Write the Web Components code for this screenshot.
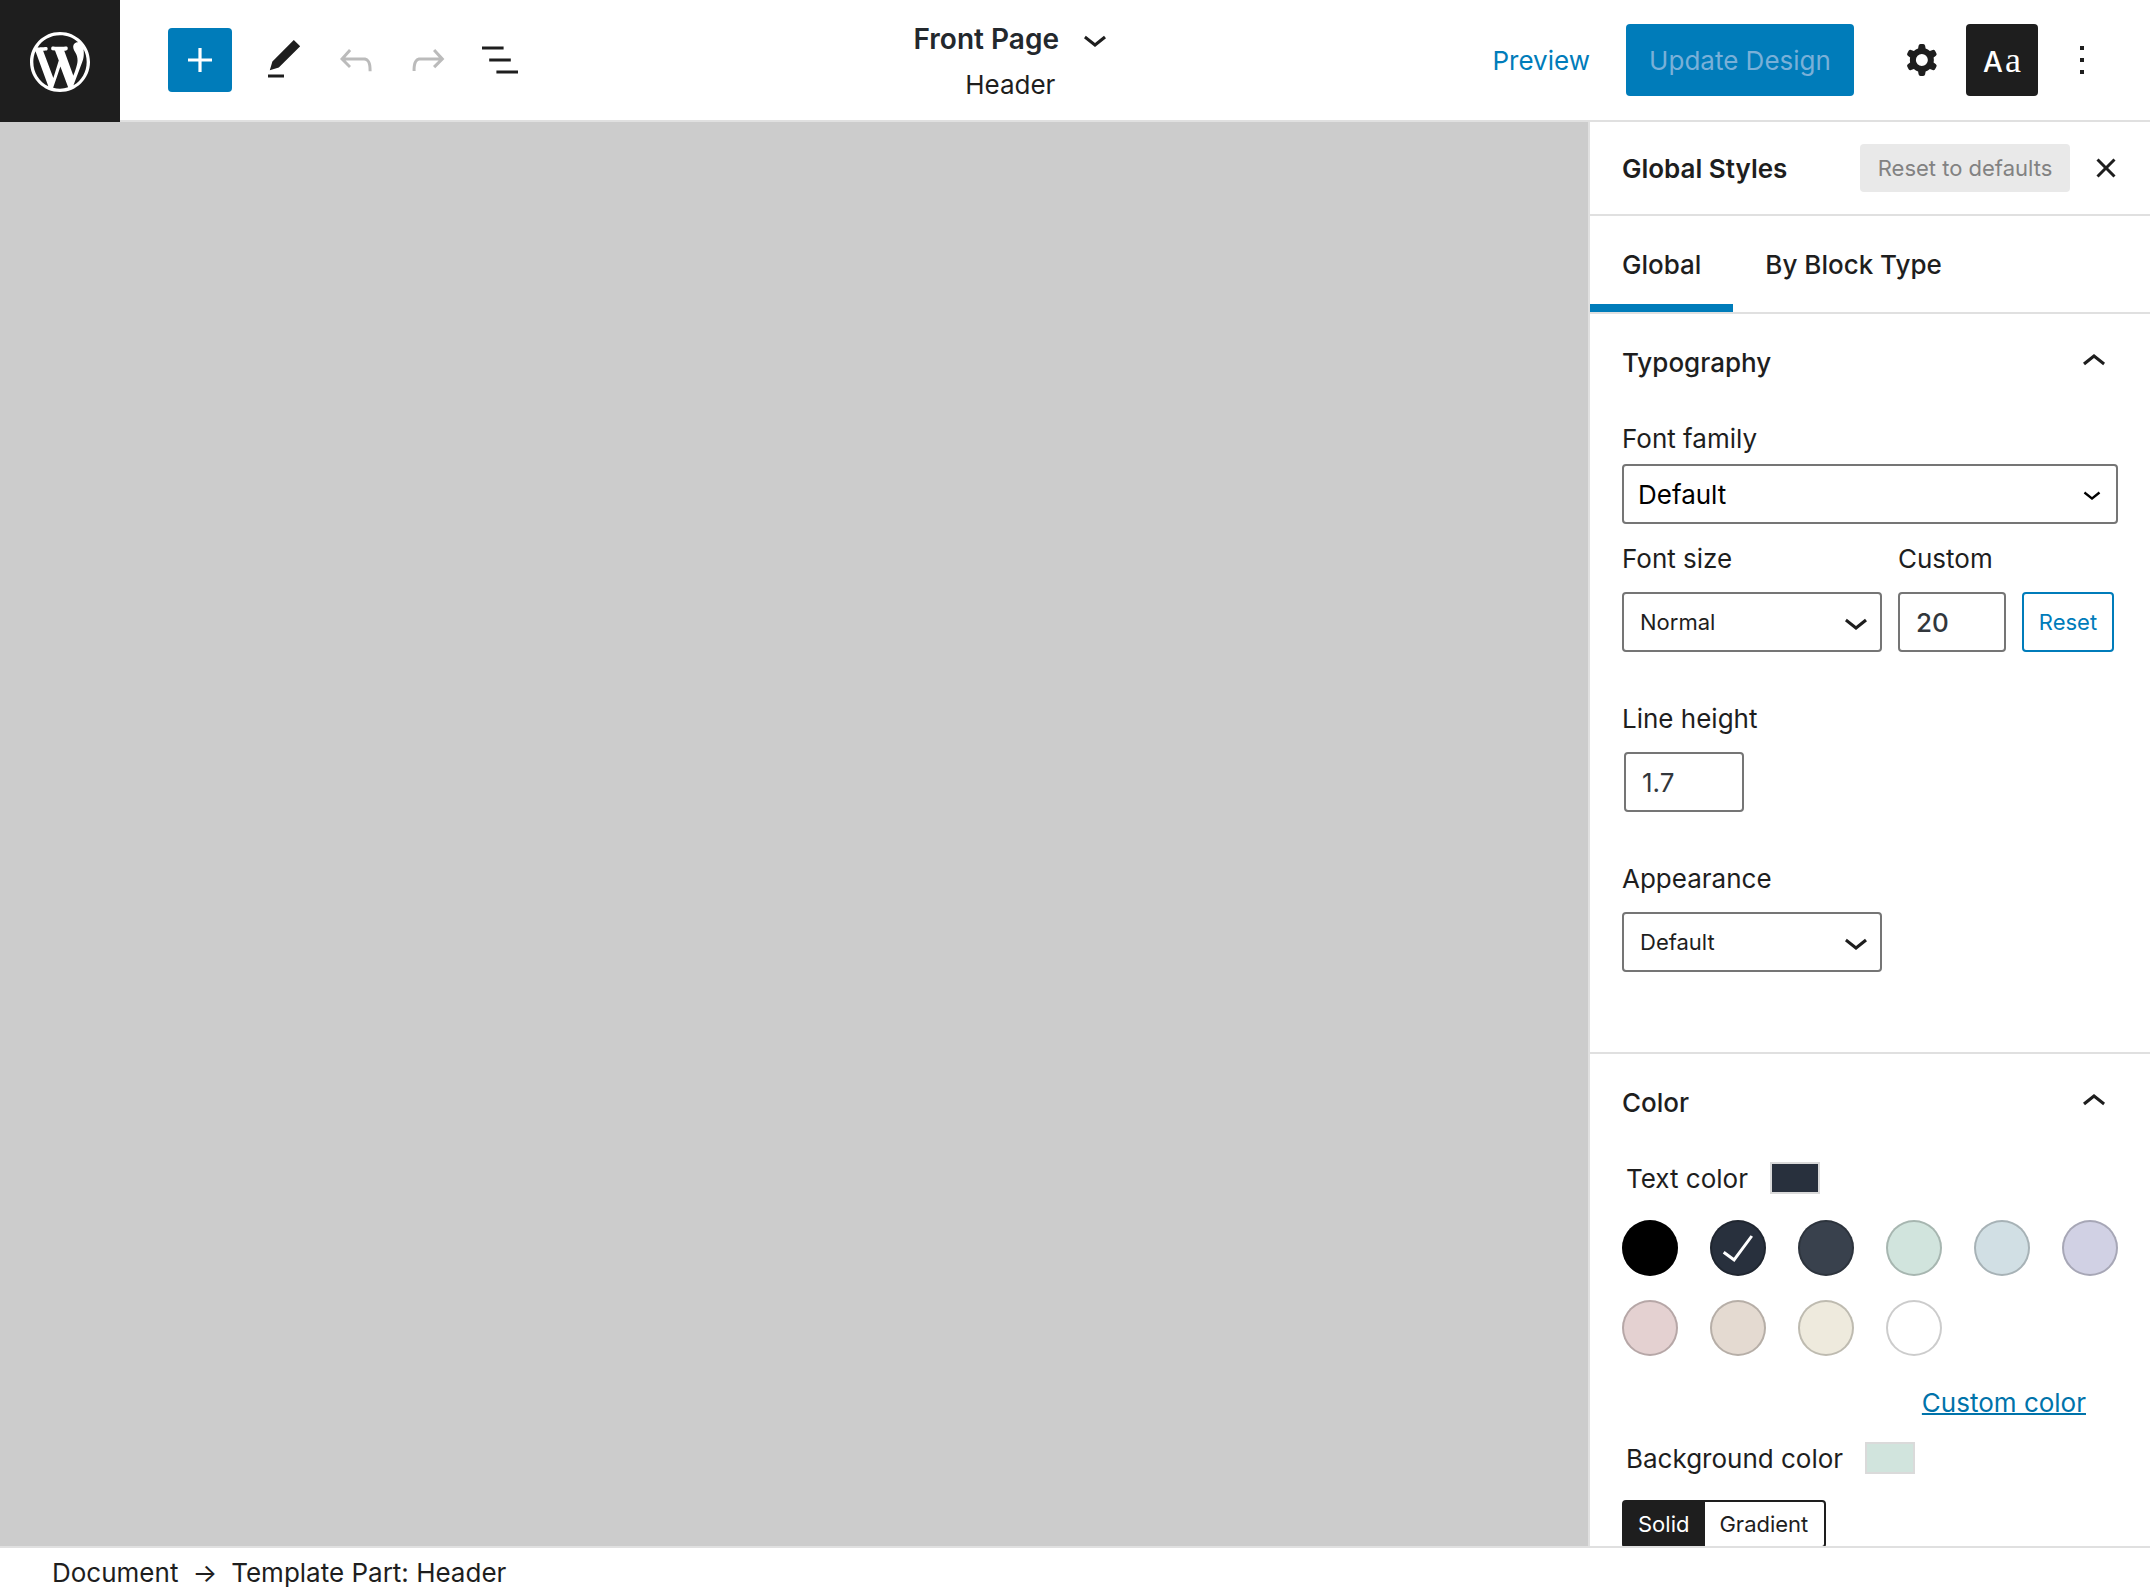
<!DOCTYPE html>
<html lang="en">
<head>
<meta charset="utf-8">
<title>Site Editor</title>
<style>
  html, body { margin: 0; height: 100%; }
  body { font-family: Inter, "Liberation Sans", sans-serif; font-size: 26px; line-height: 38px; color: #1e1e1e; background: #fff; }
</style>
</head>
<body>
<site-editor></site-editor>
<script>
const ICONS = {
  wordpress: ['-2 -2 24 24', 'M20 10c0-5.51-4.49-10-10-10C4.48 0 0 4.49 0 10c0 5.52 4.48 10 10 10 5.51 0 10-4.48 10-10zM7.78 15.37L4.37 6.22c.55-.02 1.17-.08 1.17-.08.5-.06.44-1.13-.06-1.11 0 0-1.45.11-2.37.11-.18 0-.37 0-.58-.01C4.12 2.69 6.87 1.11 10 1.11c2.33 0 4.45.87 6.05 2.34-.68-.11-1.65.39-1.65 1.58 0 .74.45 1.36.9 2.1.35.61.55 1.36.55 2.46 0 1.49-1.4 5-1.4 5l-3.03-8.37c.54-.02.82-.17.82-.17.5-.05.44-1.25-.06-1.22 0 0-1.44.12-2.38.12-.87 0-2.33-.12-2.33-.12-.5-.03-.56 1.2-.06 1.22l.92.08 1.26 3.41zM17.41 10c.24-.64.74-1.87.43-4.25.7 1.29 1.05 2.71 1.05 4.25 0 3.29-1.73 6.24-4.4 7.78.97-2.59 1.94-5.2 2.92-7.78zM6.1 18.09C3.12 16.65 1.11 13.53 1.11 10c0-1.3.23-2.48.72-3.59C3.25 10.3 4.67 14.2 6.1 18.09zm4.03-6.63l2.58 6.98c-.86.29-1.76.45-2.71.45-.79 0-1.57-.11-2.29-.33.81-2.38 1.62-4.74 2.42-7.1z'],
  plus: ['0 0 24 24', 'M18 11.2h-5.2V6h-1.6v5.2H6v1.6h5.2V18h1.6v-5.2H18z'],
  edit: ['0 0 24 24', 'M20.1 5.1L16.9 2 6.2 12.7l-1.3 4.4 4.5-1.3L20.1 5.1zM4 20.8h8v-1.5H4v1.5z'],
  undo: ['0 0 24 24', 'M18.3 11.7c-.6-.6-1.4-.9-2.3-.9H6.7l2.9-3.3-1.1-1-4.5 5L8.5 16l1-1-2.7-2.7H16c.5 0 .9.2 1.3.5 1 1 1 3.4 1 4.5v.3h1.5v-.2c0-1.5 0-4.3-1.5-5.7z'],
  redo: ['0 0 24 24', 'M15.6 6.5l-1.1 1 2.9 3.3H8c-.9 0-1.7.3-2.3.9-1.4 1.5-1.4 4.2-1.4 5.6v.2h1.5v-.3c0-1.1 0-3.5 1-4.5.3-.3.7-.5 1.3-.5h9.2L14.5 15l1.1 1.1 4.6-4.6-4.6-5z'],
  list: ['0 0 24 24', 'M13.8 5.2H3v1.5h10.8V5.2zm-3.6 12v1.5H21v-1.5H10.2zm7.2-6H6.6v1.5h10.8v-1.5z'],
  down: ['0 0 24 24', 'M17.5 11.6L12 16l-5.5-4.4.9-1.2L12 14l4.5-3.6 1 1.2z'],
  downTight: ['6 6 12 12', 'M17.5 11.6L12 16l-5.5-4.4.9-1.2L12 14l4.5-3.6 1 1.2z'],
  up: ['0 0 24 24', 'M6.5 12.4L12 8l5.5 4.4-.9 1.2L12 10l-4.5 3.6-1-1.2z'],
  cog: ['0 0 24 24', 'M10.289 4.836A1 1 0 0111.275 4h1.306a1 1 0 01.987.836l.244 1.466c.787.26 1.503.679 2.108 1.218l1.393-.522a1 1 0 011.216.437l.653 1.13a1 1 0 01-.23 1.273l-1.148.944a6.025 6.025 0 010 2.435l1.149.946a1 1 0 01.23 1.272l-.653 1.13a1 1 0 01-1.216.437l-1.394-.522c-.605.54-1.32.958-2.108 1.218l-.244 1.466a1 1 0 01-.987.836h-1.306a1 1 0 01-.986-.836l-.244-1.466a5.995 5.995 0 01-2.108-1.218l-1.394.522a1 1 0 01-1.217-.436l-.653-1.131a1 1 0 01.23-1.272l1.149-.946a6.026 6.026 0 010-2.435l-1.148-.944a1 1 0 01-.23-1.272l.653-1.131a1 1 0 011.217-.437l1.393.522a5.994 5.994 0 012.108-1.218l.244-1.466zM14.929 12a3 3 0 11-6 0 3 3 0 016 0z'],
  more: ['0 0 24 24', 'M13 19h-2v-2h2v2zm0-6h-2v-2h2v2zm0-6h-2V5h2v2z'],
  close: ['0 0 24 24', 'M12 13.06l3.712 3.713 1.061-1.06L13.061 12l3.712-3.712-1.06-1.06L12 10.938 8.288 7.227l-1.061 1.06L10.939 12l-3.712 3.712 1.06 1.061L12 13.061z'],
  check: ['0 0 24 24', 'M18.3 5.6L9.9 16.9l-4.6-3.4-.9 1.2 5.8 4.3 9.3-12.6z']
};

const BASE = `
  *, *::before, *::after { box-sizing: border-box; }
  button, input, select { font: inherit; color: inherit; margin: 0; padding: 0; border: 0; background: none; border-radius: 4px; }
  h1, h2, h3, p { margin: 0; font-size: inherit; }
`;

function define(name, render) {
  customElements.define(name, class extends HTMLElement {
    constructor() { super(); this.attachShadow({ mode: 'open' }); }
    connectedCallback() { this.shadowRoot.innerHTML = `<style>${BASE}</style>` + render(this); }
  });
}

define('ui-icon', el => {
  const [box, d] = ICONS[el.getAttribute('name')];
  const size = el.getAttribute('size') || 48;
  return `<style>:host{display:block;flex:none;width:${size}px;height:${size}px;pointer-events:none} svg{display:block;width:100%;height:100%;fill:currentColor}</style>
    <svg viewBox="${box}" aria-hidden="true"><path fill-rule="evenodd" d="${d}"/></svg>`;
});

define('tool-button', el => `
  <style>
    :host { display: block; flex: none; }
    button { display: flex; align-items: center; justify-content: center; width: 64px; height: 64px; }
    button:disabled { color: #bbb; }
    :host([primary]) button { background: #007cba; color: #fff; }
  </style>
  <button aria-label="${el.getAttribute('label')}" ${el.hasAttribute('disabled') ? 'disabled' : ''}><slot></slot></button>`);

define('editor-header', () => `
  <style>
    :host { display: flex; height: 122px; border-bottom: 2px solid #e0e0e0; background: #fff; }
    .home { flex: none; display: flex; align-items: center; justify-content: center; width: 120px; height: 124px; background: #1e1e1e; color: #fff; margin-bottom: -4px; }
    .tools { display: flex; align-items: center; gap: 8px; padding-left: 48px; }
    .tools tool-button[primary] { margin-right: 12px; }
    .doc { flex: 1; display: flex; flex-direction: column; align-items: center; justify-content: center; gap: 8px; padding-top: 4px; }
    .doc button { display: flex; align-items: center; gap: 24px; }
    h1 { font-size: 28px; font-weight: 600; color: #23282d; }
    .actions { display: flex; align-items: center; padding-right: 36px; }
    .preview { padding: 2px 36px 0 4px; color: #007cba; text-decoration: none; }
    .update { height: 72px; width: 228px; padding-top: 2px; background: #007cba; color: #79b0d8; margin-right: 36px; }
    .styles { display: flex; align-items: baseline; justify-content: center; gap: 2px; width: 72px; height: 72px; margin: 0 12px; background: #1e1e1e; color: #fff; font-size: 28px; line-height: 72px; font-weight: 500; }
    .styles span { font-family: "Liberation Serif", serif; font-size: 36px; font-weight: 400; }
  </style>
  <a class="home" href="#" aria-label="Dashboard"><ui-icon name="wordpress" size="72"></ui-icon></a>
  <div class="tools">
    <tool-button primary label="Add block"><ui-icon name="plus"></ui-icon></tool-button>
    <tool-button label="Tools"><ui-icon name="edit"></ui-icon></tool-button>
    <tool-button label="Undo" disabled><ui-icon name="undo"></ui-icon></tool-button>
    <tool-button label="Redo" disabled><ui-icon name="redo"></ui-icon></tool-button>
    <tool-button label="List view"><ui-icon name="list"></ui-icon></tool-button>
  </div>
  <div class="doc">
    <button><h1>Front Page</h1><ui-icon name="downTight" size="24"></ui-icon></button>
    <p>Header</p>
  </div>
  <div class="actions">
    <a class="preview" href="#">Preview</a>
    <button class="update" disabled>Update Design</button>
    <tool-button label="Settings"><ui-icon name="cog"></ui-icon></tool-button>
    <button class="styles" aria-label="Global styles">A<span>a</span></button>
    <tool-button label="More options"><ui-icon name="more"></ui-icon></tool-button>
  </div>`);

define('panel-section', el => `
  <style>
    :host { display: block; border-bottom: 2px solid #e0e0e0; padding: 0 32px 80px; }
    button { display: flex; align-items: center; justify-content: space-between; width: 100%; height: 98px; margin-bottom: 8px; font-weight: 500; text-align: left; }
    ui-icon { margin-bottom: 2px; }
  </style>
  <h3><button aria-expanded="true">${el.getAttribute('heading')}<ui-icon name="up"></ui-icon></button></h3>
  <slot></slot>`);

define('select-field', el => `
  <style>
    :host { display: block; }
    label { display: block; margin-bottom: 14px; }
    .box { display: grid; align-items: center; }
    .box > * { grid-area: 1 / 1; }
    ui-icon { justify-self: end; margin-right: 2px; }
    select { appearance: none; width: 100%; height: 60px; border: 2px solid #757575; background: #fff; padding: 0 48px 0 16px; font-size: 22px; }
    :host([large]) label { margin-bottom: 6px; }
    :host([large]) select { font-size: 26px; color: #000; padding-left: 14px; padding-top: 2px; }
    :host([large]) ui-icon { margin-right: 8px; color: #000; }
  </style>
  <label for="s">${el.getAttribute('label')}</label>
  <div class="box"><select id="s"><option>${el.getAttribute('value')}</option></select>
  <ui-icon name="down" size="${el.hasAttribute('large') ? 36 : 48}"></ui-icon></div>`);

define('text-field', el => `
  <style>
    :host { display: block; }
    label { display: block; margin-bottom: 14px; }
    input { display: block; width: 100%; height: 60px; border: 2px solid #757575; background: #fff; padding: 0 16px; color: #32373c; }
    :host([strong]) input { font-weight: 500; }
    :host([inset]) input { width: 120px; margin-left: 2px; }
  </style>
  <label for="t">${el.getAttribute('label')}</label>
  <input id="t" type="text" inputmode="decimal" value="${el.getAttribute('value')}">`);

define('typography-panel', () => `
  <style>
    :host { display: block; }
    .stack { display: grid; gap: 48px; }
    .fonts { display: grid; gap: 16px; }
    .row { display: grid; grid-template-columns: 260px 108px 92px; gap: 16px; align-items: end; }
    .reset { height: 60px; border: 2px solid #007cba; color: #007cba; font-size: 22px; }
    .narrow { width: 260px; }
  </style>
  <panel-section heading="Typography">
    <div class="stack">
      <div class="fonts">
        <select-field large label="Font family" value="Default"></select-field>
        <div class="row">
          <select-field label="Font size" value="Normal"></select-field>
          <text-field strong label="Custom" value="20"></text-field>
          <button class="reset">Reset</button>
        </div>
      </div>
      <text-field inset label="Line height" value="1.7"></text-field>
      <select-field class="narrow" label="Appearance" value="Default"></select-field>
    </div>
  </panel-section>`);

define('color-label', el => `
  <style>
    :host { display: flex; align-items: flex-start; gap: 22px; padding-left: 4px; }
    span:last-child { width: 50px; height: 32px; margin-top: 2px; border: 2px solid #dadada; background: ${el.getAttribute('color')}; }
  </style>
  <span>${el.getAttribute('label')}</span><span></span>`);

define('color-swatch', el => `
  <style>
    :host { display: block; width: 56px; height: 56px; }
    button { display: flex; align-items: center; justify-content: center; width: 100%; height: 100%; border-radius: 50%; color: #fff; background: ${el.getAttribute('color')}; box-shadow: inset 0 0 0 2px rgba(0,0,0,.2); }
  </style>
  <button aria-label="${el.getAttribute('label')}">${el.hasAttribute('selected') ? '<ui-icon name="check"></ui-icon>' : ''}</button>`);

define('color-panel', () => {
  const colors = [['Black', '#000'], ['Dark gray', '#28303d'], ['Gray', '#39414d'], ['Green', '#d1e4dd'], ['Blue', '#d1dfe4'], ['Purple', '#d1d1e4'], ['Red', '#e4d1d1'], ['Orange', '#e4dad1'], ['Yellow', '#eeeadd'], ['White', '#fff']];
  return `
  <style>
    :host { display: block; }
    .swatches { display: grid; grid-template-columns: repeat(6, 56px); justify-content: space-between; row-gap: 24px; margin: 22px 0 28px; }
    .custom { display: flex; justify-content: flex-end; padding-right: 32px; margin-bottom: 18px; }
    a { color: #0073aa; text-decoration-thickness: 2px; }
    .toggle { display: flex; width: max-content; margin-top: 22px; height: 48px; border: 2px solid #1e1e1e; border-radius: 4px; }
    .toggle button { font-size: 22px; padding: 0 16px 0 14px; border-radius: 0; }
    .toggle [aria-pressed=true] { background: #1e1e1e; color: #fff; }
  </style>
  <panel-section heading="Color">
    <color-label label="Text color" color="#28303d"></color-label>
    <div class="swatches">${colors.map(([n, c], i) => `<color-swatch label="${n}" color="${c}" ${i === 1 ? 'selected' : ''}></color-swatch>`).join('')}</div>
    <div class="custom"><a href="#">Custom color</a></div>
    <color-label label="Background color" color="#d1e4dd"></color-label>
    <div class="toggle"><button aria-pressed="true">Solid</button><button aria-pressed="false">Gradient</button></div>
  </panel-section>`;
});

define('styles-sidebar', () => `
  <style>
    :host { display: flex; flex-direction: column; flex: none; width: 562px; min-height: 0; overflow: hidden; border-left: 2px solid #e0e0e0; background: #fff; }
    header { flex: none; display: flex; align-items: center; height: 94px; border-bottom: 2px solid #e0e0e0; padding: 0 12px 0 32px; }
    h2 { flex: 1; font-weight: 600; padding-top: 2px; }
    .defaults { height: 48px; width: 210px; background: #e9e9e9; color: #828282; font-size: 22px; margin-right: 4px; }
    nav { flex: none; display: flex; height: 98px; border-bottom: 2px solid #e0e0e0; }
    nav button { padding: 2px 32px 0; font-weight: 500; border-radius: 0; }
    nav [aria-selected=true] { box-shadow: inset 0 -8px #007cba; }
    .body { flex: 1; min-height: 0; overflow: hidden; }
  </style>
  <header><h2>Global Styles</h2><button class="defaults" disabled>Reset to defaults</button><tool-button label="Close"><ui-icon name="close"></ui-icon></tool-button></header>
  <nav role="tablist"><button role="tab" aria-selected="true">Global</button><button role="tab" aria-selected="false">By Block Type</button></nav>
  <div class="body"><typography-panel></typography-panel><color-panel></color-panel></div>`);

define('editor-footer', () => `
  <style>
    :host { display: flex; align-items: center; gap: 14px; box-sizing: border-box; height: 50px; border-top: 2px solid #e0e0e0; padding: 2px 0 0 52px; background: #fff; }
  </style>
  <button>Document</button><span aria-hidden="true">→</span><button>Template Part: Header</button>`);

define('site-editor', () => `
  <style>
    :host { display: flex; flex-direction: column; height: 100vh; }
    editor-header, editor-footer { flex: none; box-sizing: border-box; }
    main { flex: 1; display: flex; min-height: 0; }
    .canvas { flex: 1; background: #ccc; }
    styles-sidebar { box-sizing: border-box; }
  </style>
  <editor-header></editor-header>
  <main><div class="canvas"></div><styles-sidebar></styles-sidebar></main>
  <editor-footer></editor-footer>`);
</script>
</body>
</html>
